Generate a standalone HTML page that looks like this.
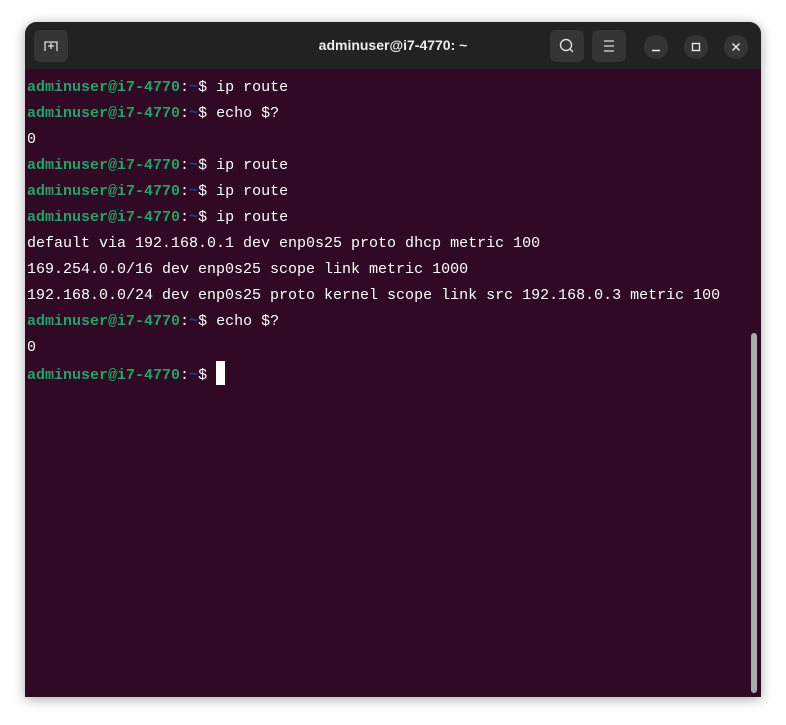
<!DOCTYPE html>
<html><head><style>
body{margin:0;width:786px;height:725px;background:#fff;position:relative;overflow:hidden}
.win{position:absolute;left:25px;top:22px;width:736px;height:675px;border-radius:12px 12px 0 0;overflow:hidden;box-shadow:0 2px 12px rgba(0,0,0,.35);background:#300a24}
.hdr{position:absolute;left:0;top:0;width:100%;height:47px;background:#222}
.btn{position:absolute;top:8px;width:34px;height:32px;border-radius:6px;background:#353535}
.circ{position:absolute;top:13px;width:24px;height:24px;border-radius:50%;background:#353535}
.title{position:absolute;top:0;left:0;width:100%;text-align:center;font:bold 14px/47px "Liberation Sans",sans-serif;color:#eee}
.term{position:absolute;left:2px;top:53px;font:15px/26px "Liberation Mono",monospace;color:#fff;white-space:pre}
.g{color:#26a269;font-weight:bold}.b{color:#12488b;font-weight:bold}
.sb{position:absolute;left:726px;top:311px;width:6px;height:360px;background:#aaa;border-radius:3px}
.cur{display:inline-block;width:9px;height:24px;background:#fff;vertical-align:-6px}
</style></head><body>
<div class="win">
<div class="hdr">
<div class="btn" style="left:9px"><svg width="34" height="32"><path d="M11 21V12h12v9M17 13v6M14 16h6" stroke="#ddd" stroke-width="1.3" fill="none"/></svg></div>
<div class="title">adminuser@i7-4770: ~</div>
<div class="btn" style="left:525px"><svg width="34" height="32"><circle cx="16" cy="15" r="5.5" stroke="#ddd" stroke-width="1.4" fill="none"/><path d="M20 19l3 3" stroke="#ddd" stroke-width="1.4"/></svg></div>
<div class="btn" style="left:567px"><svg width="34" height="32"><path d="M12 11h10M12 16h10M12 21h10" stroke="#ddd" stroke-width="1.2"/></svg></div>
<div class="circ" style="left:619px"><svg width="24" height="24"><path d="M8 15.5h8" stroke="#eee" stroke-width="1.4"/></svg></div>
<div class="circ" style="left:659px"><svg width="24" height="24"><rect x="8.5" y="8.5" width="7" height="7" stroke="#eee" stroke-width="1.3" fill="none"/></svg></div>
<div class="circ" style="left:699px"><svg width="24" height="24"><path d="M8.5 8.5l7 7M15.5 8.5l-7 7" stroke="#eee" stroke-width="1.4"/></svg></div>
</div>
<div class="term"><span class="g">adminuser@i7-4770</span>:<span class="b">~</span>$ ip route
<span class="g">adminuser@i7-4770</span>:<span class="b">~</span>$ echo $?
0
<span class="g">adminuser@i7-4770</span>:<span class="b">~</span>$ ip route
<span class="g">adminuser@i7-4770</span>:<span class="b">~</span>$ ip route
<span class="g">adminuser@i7-4770</span>:<span class="b">~</span>$ ip route
default via 192.168.0.1 dev enp0s25 proto dhcp metric 100
169.254.0.0/16 dev enp0s25 scope link metric 1000
192.168.0.0/24 dev enp0s25 proto kernel scope link src 192.168.0.3 metric 100
<span class="g">adminuser@i7-4770</span>:<span class="b">~</span>$ echo $?
0
<span class="g">adminuser@i7-4770</span>:<span class="b">~</span>$ <span class="cur"></span></div>
<div class="sb"></div>
</div>
</body></html>
